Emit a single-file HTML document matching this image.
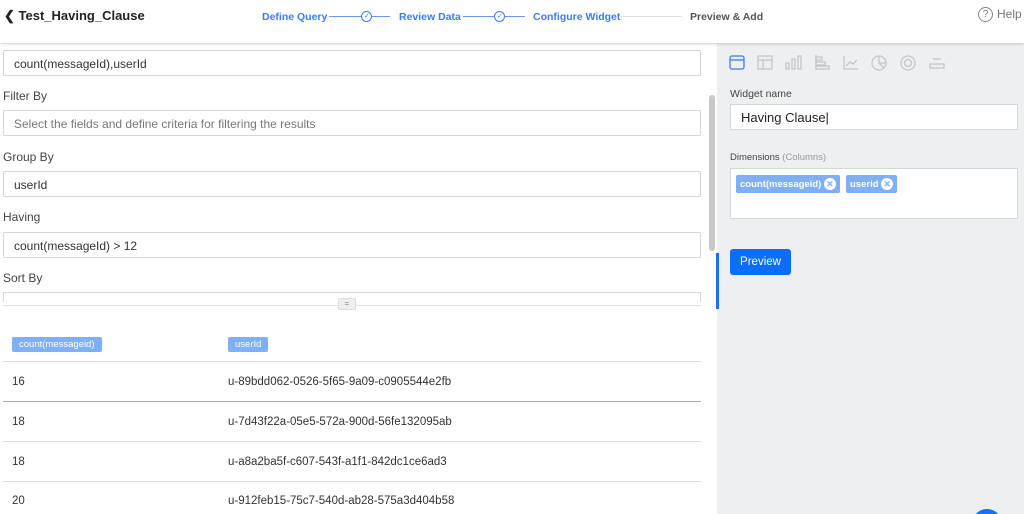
<!DOCTYPE html>
<html style="overflow:hidden;width:1024px;height:514px"><head><style>
*{margin:0;padding:0;box-sizing:border-box}
body{width:1024px;height:514px;overflow:hidden;font-family:"Liberation Sans",sans-serif;background:#fff;position:relative;color:#333}
.a{position:absolute}
.hdr{left:0;top:0;width:1024px;height:43px;background:#fff;box-shadow:0 1px 3px rgba(0,0,0,.18);z-index:2}
.step{font-size:10.5px;color:#3d7cf0;top:11px;font-weight:bold}
.line{height:1px;background:#6b9af0;top:16px}
.chk{width:11px;height:11px;border:1px solid #3d7cf0;border-radius:50%;top:11px;background:#fff}
.inp{left:3px;width:698px;height:26px;border:1px solid #d6d6d6;border-radius:2px;font-size:12px;padding:6px 10px;color:#333}
.lbl{left:3px;font-size:12px;color:#444}
.tag{background:#7fb0f7;color:#fff;font-size:9.5px;padding:2px 7px;border-radius:2px;font-weight:bold}
.rowl{left:3px;width:698px;height:1px;background:#ddd}
.cell{font-size:11.5px;color:#333}
</style></head><body>
<div class="a hdr">
<div class="a" style="left:4px;top:8px;font-size:13px;font-weight:bold;color:#222">&#10094;&nbsp;Test_Having_Clause</div>
<div class="a step" style="left:262px">Define Query</div>
<div class="a line" style="left:329px;width:32px"></div>
<div class="a chk" style="left:361px"></div>
<div class="a" style="left:364px;top:12px;font-size:7px;color:#3d7cf0">✓</div>
<div class="a line" style="left:372px;width:18px"></div>
<div class="a step" style="left:399px">Review Data</div>
<div class="a line" style="left:463px;width:31px"></div>
<div class="a chk" style="left:494px"></div>
<div class="a" style="left:497px;top:12px;font-size:7px;color:#3d7cf0">✓</div>
<div class="a line" style="left:505px;width:20px"></div>
<div class="a step" style="left:533px">Configure Widget</div>
<div class="a" style="left:620px;top:16px;width:62px;height:1px;background:#e3e3e3"></div>
<div class="a" style="left:690px;top:11px;font-size:10.5px;color:#555;font-weight:bold">Preview &amp; Add</div>
<div class="a" style="left:978px;top:7px;width:15px;height:15px;border:1px solid #888;border-radius:50%;font-size:10px;text-align:center;line-height:13px;color:#777">?</div>
<div class="a" style="left:997px;top:7px;font-size:12px;color:#777">Help</div>
</div>

<div class="a inp" style="top:50px">count(messageId),userId</div>
<div class="a lbl" style="top:89px">Filter By</div>
<div class="a inp" style="top:110px;color:#777">Select the fields and define criteria for filtering the results</div>
<div class="a lbl" style="top:150px">Group By</div>
<div class="a inp" style="top:171px">userId</div>
<div class="a lbl" style="top:210px">Having</div>
<div class="a inp" style="top:232px">count(messageId) &gt; 12</div>
<div class="a lbl" style="top:271px">Sort By</div>
<div class="a" style="left:3px;top:292px;width:698px;height:10px;border:1px solid #d6d6d6;border-bottom:none"></div>
<div class="a" style="left:3px;top:305px;width:698px;height:1px;background:#e3e3e3"></div>
<div class="a" style="left:338px;top:298px;width:18px;height:12px;background:#eee;border:1px solid #ddd;border-radius:2px;font-size:8px;text-align:center;color:#888;line-height:10px">=</div>
<div class="a" style="left:709px;top:95px;width:6px;height:156px;background:#c8c8c8;border-radius:3px"></div>

<div class="a tag" style="left:12px;top:337px;font-weight:normal">count(messageid)</div>
<div class="a tag" style="left:228px;top:337px;font-weight:normal">userId</div>
<div class="a rowl" style="top:361px"></div>
<div class="a cell" style="left:12px;top:376px">16</div><div class="a cell" style="left:228px;top:376px">u-89bdd062-0526-5f65-9a09-c0905544e2fb</div>
<div class="a rowl" style="top:401px;background:#aaa"></div>
<div class="a cell" style="left:12px;top:416px">18</div><div class="a cell" style="left:228px;top:416px">u-7d43f22a-05e5-572a-900d-56fe132095ab</div>
<div class="a rowl" style="top:441px"></div>
<div class="a cell" style="left:12px;top:456px">18</div><div class="a cell" style="left:228px;top:456px">u-a8a2ba5f-c607-543f-a1f1-842dc1ce6ad3</div>
<div class="a rowl" style="top:481px"></div>
<div class="a cell" style="left:12px;top:495px">20</div><div class="a cell" style="left:228px;top:495px">u-912feb15-75c7-540d-ab28-575a3d404b58</div>

<div class="a" style="left:717px;top:43px;width:307px;height:471px;background:#eeeff1"></div>
<div class="a" style="left:716px;top:253px;width:3px;height:56px;background:#1a6ff5"></div>
<svg class="a" style="left:728px;top:54px" width="220" height="18" fill="none" stroke-width="1.3">
<rect x="2" y="2" width="14" height="13" rx="2" stroke="#3d7cf0"/><line x1="2" y1="6" x2="16" y2="6" stroke="#3d7cf0"/>
<g stroke="#c4c6c9"><rect x="30" y="2" width="14" height="13"/><line x1="30" y1="6" x2="44" y2="6"/><line x1="35" y1="6" x2="35" y2="15"/>
<rect x="58" y="9" width="3" height="6"/><rect x="64" y="5" width="3" height="10"/><rect x="70" y="2" width="3" height="13"/>
<line x1="88" y1="1" x2="88" y2="16"/><rect x="88" y="3" width="6" height="3"/><rect x="88" y="8" width="9" height="3"/><rect x="88" y="12" width="13" height="3"/>
<polyline points="116,2 116,15 130,15"/><polyline points="118,12 122,8 125,10 129,6"/>
<circle cx="151" cy="9" r="7"/><path d="M151 2v7h7M151 9l5 5"/>
<circle cx="180" cy="9" r="7"/><circle cx="180" cy="9" r="3.5"/>
<rect x="202" y="10" width="14" height="4"/><line x1="205" y1="5" x2="213" y2="5"/></g>
</svg>
<div class="a" style="left:730px;top:88px;font-size:10.5px;color:#444">Widget name</div>
<div class="a" style="left:730px;top:104px;width:288px;height:26px;background:#fff;border:1px solid #d6d6d6;font-size:13px;padding:5px 10px;color:#222">Having Clause|</div>
<div class="a" style="left:730px;top:152px;font-size:9.5px;color:#444">Dimensions <span style="color:#999">(Columns)</span></div>
<div class="a" style="left:730px;top:168px;width:288px;height:51px;background:#fff;border:1px solid #d6d6d6"></div>
<div class="a tag" style="left:736px;top:175px;padding:3px 4px;height:18px">count(messageid) <span style="display:inline-block;width:12px;height:12px;border-radius:50%;background:#fff;color:#7fb0f7;text-align:center;line-height:12px;font-size:9px">✕</span></div>
<div class="a tag" style="left:846px;top:175px;padding:3px 4px;height:18px">userid <span style="display:inline-block;width:12px;height:12px;border-radius:50%;background:#fff;color:#7fb0f7;text-align:center;line-height:12px;font-size:9px">✕</span></div>
<div class="a" style="left:730px;top:249px;width:61px;height:26px;background:#0d6efd;border-radius:3px;color:#fff;font-size:11.5px;text-align:center;line-height:26px">Preview</div>
<div class="a" style="left:972px;top:509px;width:30px;height:5px;overflow:hidden"><div style="width:30px;height:30px;border-radius:50%;background:#1a6ff5"></div></div>
</body></html>
